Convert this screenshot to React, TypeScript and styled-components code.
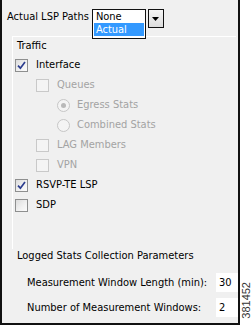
import React from "react";
import styled, { createGlobalStyle, css } from "styled-components";

const Global = createGlobalStyle`
  html, body { margin: 0; padding: 0; background: #ffffff; }
  body { font-family: Tahoma, "DejaVu Sans Condensed", "Liberation Sans", sans-serif; font-size: 11px; }
`;

const Page = styled.div`
  display: flex;
  width: 252px;
  height: 325px;
`;

const Frame = styled.div`
  position: relative;
  width: 241px;
  height: 325px;
  border-left: 2px solid #111;
  border-right: 2px solid #111;
  border-bottom: 2px solid #111;
  background: #f0f0f0;
  display: flex;
  flex-direction: column;
  padding-left: 5px;
  box-sizing: border-box;
`;

const Side = styled.div`
  flex: 1;
  display: flex;
  align-items: flex-end;
  justify-content: center;
  padding-bottom: 6px;
`;

const SideText = styled.span`
  writing-mode: vertical-rl;
  transform: rotate(180deg);
  font-family: "Liberation Sans", Arial, sans-serif;
  font-size: 11px;
  color: #333;
`;

const TopRow = styled.div`
  display: flex;
  align-items: flex-start;
  margin-top: 10px;
  height: 22px;
`;

const Label = styled.span<{ $disabled?: boolean }>`
  color: ${(p) => (p.$disabled ? "#a3a3a3" : "#000")};
  white-space: nowrap;
  line-height: 14px;
`;

const Combo = styled.div`
  position: relative;
  display: flex;
  margin-left: 3px;
  margin-top: -1px;
  gap: 2px;
`;

const ComboField = styled.div`
  width: 54px;
  height: 14px;
  background: #fff;
  padding-left: 3px;
  line-height: 14px;
  box-sizing: border-box;
  border: 1px solid #111;
  border-bottom: none;
`;

const ComboButton = styled.div`
  width: 16px;
  height: 19px;
  box-sizing: border-box;
  border: 1px solid #111;
  background: linear-gradient(#f6f6f6, #dcdcdc);
  display: flex;
  align-items: center;
  justify-content: center;
`;

const DropList = styled.div`
  position: absolute;
  left: 0;
  top: 14px;
  width: 54px;
  box-sizing: border-box;
  border: 1px solid #111;
  border-top: none;
  background: #fff;
  padding: 0 1px 2px 1px;
  z-index: 2;
`;

const DropItem = styled.div<{ $selected?: boolean }>`
  height: 13px;
  line-height: 13px;
  padding-left: 2px;
  background: ${(p) => (p.$selected ? "#3399ff" : "#fff")};
  color: ${(p) => (p.$selected ? "#fff" : "#000")};
`;

const Group = styled.div`
  margin-top: 4px;
  margin-left: 5px;
  margin-right: 2px;
  border-top: 1px solid #fff;
  border-left: 1px solid #fff;
  height: 212px;
  display: flex;
  flex-direction: column;
`;

const GroupTitle = styled.div`
  margin-left: 4px;
  margin-top: 2px;
  height: 16px;
  line-height: 14px;
`;

const OptionRow = styled.div<{ $indent: number }>`
  display: flex;
  align-items: center;
  height: 20px;
  padding-left: ${(p) => 2 + p.$indent * 21}px;
  gap: 6px;
`;

const boxBase = css`
  width: 13px;
  height: 13px;
  box-sizing: border-box;
  flex: none;
  display: flex;
  align-items: center;
  justify-content: center;
`;

const CheckBox = styled.div<{ $disabled?: boolean }>`
  ${boxBase};
  border: 1px solid ${(p) => (p.$disabled ? "#c9c9c9" : "#8e8f8f")};
  background: ${(p) =>
    p.$disabled
      ? "#f4f4f4"
      : "linear-gradient(135deg, #dcdcdc 0%, #f2f2f2 60%, #fbfbfb 100%)"};
  margin-right: 2px;
`;

const Radio = styled.div<{ $disabled?: boolean }>`
  ${boxBase};
  border-radius: 50%;
  border: 1px solid ${(p) => (p.$disabled ? "#c6c6c6" : "#8e8f8f")};
  background: #f4f4f4;
  margin-right: 1px;
`;

const RadioDot = styled.div`
  width: 5px;
  height: 5px;
  border-radius: 50%;
  background: #b9b9b9;
`;

const Check = () => (
  <svg width="9" height="9" viewBox="0 0 9 9">
    <path d="M1 4.6 L3.4 7.2 L8 1" fill="none" stroke="#2b3c8e" strokeWidth="1.7" />
  </svg>
);

const Params = styled.div`
  margin-left: 10px;
  display: flex;
  flex-direction: column;
`;

const ParamsTitle = styled.div`
  height: 16px;
  line-height: 14px;
  margin-bottom: 5px;
`;

const ParamRow = styled.div`
  display: flex;
  align-items: center;
  justify-content: space-between;
  height: 25px;
  padding-left: 10px;
`;

const Input = styled.div`
  width: 22px;
  height: 19px;
  background: #fff;
  box-sizing: border-box;
  padding-left: 3px;
  line-height: 19px;
`;

const ArrowDown = () => (
  <svg width="7" height="4" viewBox="0 0 7 4">
    <path d="M0 0 H7 L3.5 4 Z" fill="#000" />
  </svg>
);

type Opt = { label: string; indent: number; kind: "check" | "radio"; checked?: boolean; disabled?: boolean };

const options: Opt[] = [
  { label: "Interface", indent: 0, kind: "check", checked: true },
  { label: "Queues", indent: 1, kind: "check", disabled: true },
  { label: "Egress Stats", indent: 2, kind: "radio", checked: true, disabled: true },
  { label: "Combined Stats", indent: 2, kind: "radio", disabled: true },
  { label: "LAG Members", indent: 1, kind: "check", disabled: true },
  { label: "VPN", indent: 1, kind: "check", disabled: true },
  { label: "RSVP-TE LSP", indent: 0, kind: "check", checked: true },
  { label: "SDP", indent: 0, kind: "check" },
];

export default function App() {
  return (
    <>
      <Global />
      <Page>
        <Frame>
          <TopRow>
            <Label>Actual LSP Paths</Label>
            <Combo>
              <ComboField>None</ComboField>
              <ComboButton>
                <ArrowDown />
              </ComboButton>
              <DropList>
                <DropItem $selected>Actual</DropItem>
              </DropList>
            </Combo>
          </TopRow>
          <Group>
            <GroupTitle>Traffic</GroupTitle>
            {options.map((o) => (
              <OptionRow key={o.label} $indent={o.indent}>
                {o.kind === "check" ? (
                  <CheckBox $disabled={o.disabled}>{o.checked && <Check />}</CheckBox>
                ) : (
                  <Radio $disabled={o.disabled}>{o.checked && <RadioDot />}</Radio>
                )}
                <Label $disabled={o.disabled}>{o.label}</Label>
              </OptionRow>
            ))}
          </Group>
          <Params>
            <ParamsTitle>Logged Stats Collection Parameters</ParamsTitle>
            <ParamRow>
              <Label>Measurement Window Length (min):</Label>
              <Input>30</Input>
            </ParamRow>
            <ParamRow>
              <Label>Number of Measurement Windows:</Label>
              <Input>2</Input>
            </ParamRow>
          </Params>
        </Frame>
        <Side>
          <SideText>381452</SideText>
        </Side>
      </Page>
    </>
  );
}
